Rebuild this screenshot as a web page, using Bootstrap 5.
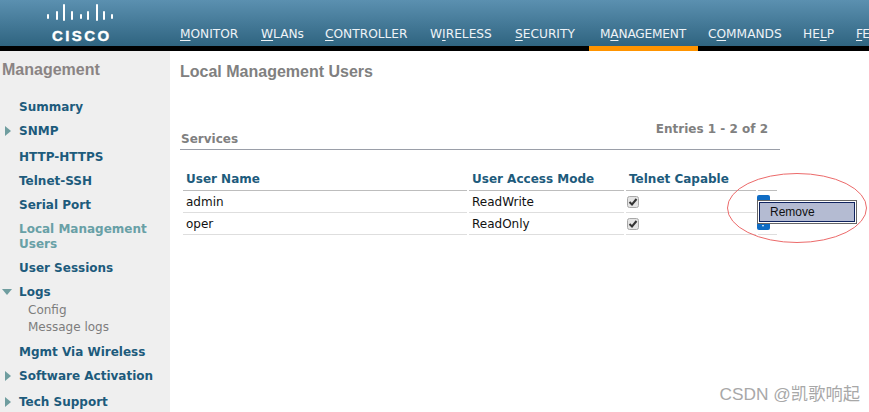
<!DOCTYPE html>
<html lang="en"><head><meta charset="utf-8"><title>Local Management Users</title>
<link href="https://cdn.jsdelivr.net/npm/bootstrap@5.3.0/dist/css/bootstrap.min.css" rel="stylesheet">
<style>
html,body{height:100%;overflow:hidden;background:#fff;font-family:"DejaVu Sans",sans-serif;}
.wlc-top{height:46px;background:linear-gradient(#5b90b0,#2f6480);}
.wlc-logo{width:170px;flex:none;}
.wlc-logotext{font:bold 15px "Liberation Sans",sans-serif;letter-spacing:2.4px;fill:#fff;stroke:#fff;stroke-width:.4px;}
.wlc-nav{padding-left:169px;margin-top:-46px;height:46px;white-space:nowrap;overflow:hidden;}
.wlc-nav a{display:block;flex:none;padding:26px 0 0 11px;height:46px;color:#eef3f7;font-size:12.2px;line-height:17px;text-decoration:none;}
.wlc-nav a:nth-child(1){width:81px;}
.wlc-nav a:nth-child(2){width:64px;}
.wlc-nav a:nth-child(3){width:105px;}
.wlc-nav a:nth-child(4){width:85px;}
.wlc-nav a:nth-child(5){width:85px;}
.wlc-nav a:nth-child(6){width:108px;letter-spacing:-.2px;}
.wlc-nav a:nth-child(7){width:95px;}
.wlc-nav a:nth-child(8){width:53px;}
.wlc-nav a:nth-child(9){letter-spacing:-.8px;}
.wlc-nav u{text-underline-offset:2px;}
.wlc-strip{height:5px;background:#000;padding-left:589px;}
.wlc-strip i{display:block;width:109px;height:5px;background:#ff9400;}
.wlc-side{width:170px;flex:none;background:#efefef;height:361px;overflow:hidden;padding:10px 0 0 0;}
.wlc-side h2{font:bold 16px "Liberation Sans",sans-serif;color:#8a8484;margin:0 0 21px 2px;line-height:18px;}
.wlc-item{position:relative;padding-left:19px;font-weight:700;font-size:12px;line-height:15px;color:#1d5b7c;margin-bottom:9px;}
.wlc-item.wlc-cur{color:#68a0a6;}
.wlc-item.wlc-more{margin-bottom:11px;}
.wlc-arrow{position:absolute;left:5px;top:2px;width:0;height:0;border-style:solid;border-width:5.5px 0 5.5px 6px;border-color:transparent transparent transparent #6f9d9f;}
.wlc-arrow.wlc-down{left:2px;top:4px;border-width:6px 5.5px 0 5.5px;border-color:#6f9d9f transparent transparent transparent;}
.wlc-sub{padding-left:28px;font-size:12px;line-height:17px;color:#7d7d7d;margin:-7px 0 9px;}
.wlc-main{flex:1;position:relative;padding:12px 0 0 10px;min-width:0;}
.wlc-title{font:bold 16px "Liberation Sans",sans-serif;color:#808080;line-height:18px;margin:0;}
.wlc-head{width:600px;height:29px;margin-top:40px;border-bottom:1px solid #9a9ea8;}
.wlc-serv{font-weight:700;font-size:12px;color:#808080;line-height:15px;padding-top:11px;padding-left:1px;}
.wlc-entries{font-weight:700;font-size:12px;color:#808080;line-height:15px;padding-top:1px;padding-right:12px;}
.wlc-table{width:598px;margin:17px 0 0 1px;border-collapse:separate;border-spacing:2px 0;table-layout:fixed;}
.wlc-table th{color:#1d5b7c;font-size:12px;font-weight:700;line-height:16px;padding:4px 3px 3px;border-bottom:1px solid #bdbdbd;}
.wlc-table td{font-size:12px;color:#111;line-height:16px;padding:3px 3px 2px;border-bottom:1px solid #dedede;}
.wlc-check{display:block;width:12px;height:12px;margin-left:-2px;}
.wlc-blue{position:absolute;left:587px;top:144px;width:13px;height:35px;background:#0f6cc4;border-radius:2px;}
.wlc-blue::after{content:"";position:absolute;left:5px;bottom:3px;border-style:solid;border-width:2px 1.5px 0;border-color:#fff transparent transparent;}
.wlc-menu{position:absolute;left:587px;top:149px;width:100px;height:24px;border:1px solid #666;background:#fff;padding:1px;}
.wlc-menu div{height:100%;background:#b4bbd2;border:1px solid #10245f;font:12px/18px "Liberation Sans",sans-serif;color:#111;padding-left:10px;}
.wlc-ring{position:absolute;left:556px;top:121px;width:142px;height:72px;pointer-events:none;}
.wlc-mark{position:absolute;right:9px;bottom:8px;font:17.3px/20px "Liberation Sans","Noto Sans CJK SC",sans-serif;color:#a8a8a8;}
</style></head>
<body>
<header>
<div class="wlc-top d-flex">
 <div class="wlc-logo">
  <svg width="170" height="46" viewBox="0 0 170 46" aria-label="Cisco">
   <g stroke="#fff" stroke-width="2" stroke-linecap="round">
    <path d="M48 15v3M57 12v7M64 5v15M72 12v7M81 15v3M88 12v7M97 5v15M104 12v7M112 15v3"/>
   </g>
   <text class="wlc-logotext" x="52" y="40.5">CISCO</text>
  </svg>
 </div>
</div>
<nav class="wlc-nav d-flex">
 <a href="#"><u>M</u>ONITOR</a><a href="#"><u>W</u>LANs</a><a href="#"><u>C</u>ONTROLLER</a><a href="#">W<u>I</u>RELESS</a><a href="#"><u>S</u>ECURITY</a><a href="#">M<u>A</u>NAGEMENT</a><a href="#">C<u>O</u>MMANDS</a><a href="#">HE<u>L</u>P</a><a href="#"><u>F</u>E</a>
</nav>
<div class="wlc-strip"><i></i></div>
</header>
<div class="d-flex">
 <aside class="wlc-side">
  <h2>Management</h2>
  <div class="wlc-item">Summary</div>
  <div class="wlc-item wlc-more"><span class="wlc-arrow"></span>SNMP</div>
  <div class="wlc-item">HTTP-HTTPS</div>
  <div class="wlc-item">Telnet-SSH</div>
  <div class="wlc-item">Serial Port</div>
  <div class="wlc-item wlc-cur">Local Management Users</div>
  <div class="wlc-item">User Sessions</div>
  <div class="wlc-item"><span class="wlc-arrow wlc-down"></span>Logs</div>
  <div class="wlc-sub">Config<br>Message logs</div>
  <div class="wlc-item">Mgmt Via Wireless</div>
  <div class="wlc-item wlc-more"><span class="wlc-arrow"></span>Software Activation</div>
  <div class="wlc-item"><span class="wlc-arrow"></span>Tech Support</div>
 </aside>
 <main class="wlc-main">
  <h1 class="wlc-title">Local Management Users</h1>
  <div class="wlc-head d-flex justify-content-between">
   <div class="wlc-serv">Services</div><div class="wlc-entries">Entries 1 - 2 of 2</div>
  </div>
  <table class="wlc-table">
   <colgroup><col style="width:284px"><col style="width:155px"><col style="width:130px"><col></colgroup>
   <thead><tr><th>User Name</th><th>User Access Mode</th><th>Telnet Capable</th><th></th></tr></thead>
   <tbody>
    <tr><td>admin</td><td>ReadWrite</td><td><svg class="wlc-check" viewBox="0 0 12 12"><rect x=".5" y=".5" width="11" height="11" rx="2" fill="#e4e4e4" stroke="#a8a8a8"/><path d="M2.5 6l2.5 2.5 4.5-5.5" fill="none" stroke="#333" stroke-width="2"/></svg></td><td></td></tr>
    <tr><td>oper</td><td>ReadOnly</td><td><svg class="wlc-check" viewBox="0 0 12 12"><rect x=".5" y=".5" width="11" height="11" rx="2" fill="#e4e4e4" stroke="#a8a8a8"/><path d="M2.5 6l2.5 2.5 4.5-5.5" fill="none" stroke="#333" stroke-width="2"/></svg></td><td></td></tr>
   </tbody>
  </table>
  <div class="wlc-blue"></div>
  <div class="wlc-menu"><div>Remove</div></div>
  <svg class="wlc-ring" viewBox="0 0 142 72"><ellipse cx="71" cy="36" rx="69.5" ry="34.5" fill="none" stroke="#ec6a6a" stroke-width="1"/></svg>
 </main>
</div>
<div class="wlc-mark">CSDN @凯歌响起</div>
</body></html>
